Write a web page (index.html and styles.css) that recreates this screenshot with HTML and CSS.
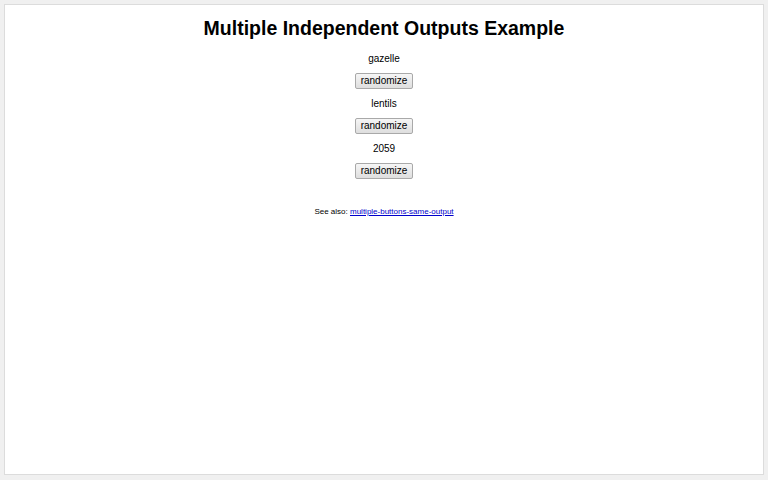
FILE: index.html
```html
<!DOCTYPE html>
<html lang="en">
<head>
    <meta charset="UTF-8">
    <meta name="viewport" content="width=device-width, initial-scale=1.0">
    <title>Multiple Independent Outputs Example</title>
    <link rel="stylesheet" href="styles.css">
</head>
<body>
    <div class="page">
        <h1>Multiple Independent Outputs Example</h1>

        <div class="outputs">
            <div class="output" id="animal">gazelle</div>
            <button onclick="randomize('animal')">randomize</button>
            <div class="output" id="food">lentils</div>
            <button onclick="randomize('food')">randomize</button>
            <div class="output" id="year">2059</div>
            <button onclick="randomize('year')">randomize</button>
        </div>

        <p class="see-also">See also: <a href="#">multiple-buttons-same-output</a></p>
    </div>

    <script>
        const choices = {
            animal: ['gazelle', 'otter', 'heron', 'lynx', 'badger'],
            food: ['lentils', 'rice', 'barley', 'quinoa', 'chickpeas']
        };

        function randomize(id) {
            const el = document.getElementById(id);
            if (id === 'year') {
                el.textContent = 1900 + Math.floor(Math.random() * 200);
                return;
            }
            const list = choices[id];
            el.textContent = list[Math.floor(Math.random() * list.length)];
        }
    </script>
</body>
</html>
```

FILE: styles.css
```css
body {
    font-family: "Liberation Sans", Arial, sans-serif;
    margin: 0;
    padding: 4px;
    background-color: #f0f0f0;
}
.page {
    height: 469px;
    background-color: #fff;
    border: 1px solid #dcdcdc;
    text-align: center;
}
h1 {
    font-size: 19.5px;
    line-height: 24px;
    margin: 11px 0 12px;
}
.outputs {
    display: flex;
    flex-direction: column;
    align-items: center;
    gap: 8px;
}
.output {
    font-size: 10px;
    line-height: 13px;
}
button {
    font-family: "Liberation Sans", Arial, sans-serif;
    font-size: 10px;
    line-height: 12px;
    height: 16px;
    padding: 1px 5px;
    color: #000;
    border: 1px solid #a9a9a9;
    border-radius: 2px;
    background: linear-gradient(#f6f6f6, #dedede);
    cursor: pointer;
}
.see-also {
    font-size: 8px;
    line-height: 11px;
    margin: 27px 0 0;
}
.see-also a {
    color: #0000cc;
}
```
